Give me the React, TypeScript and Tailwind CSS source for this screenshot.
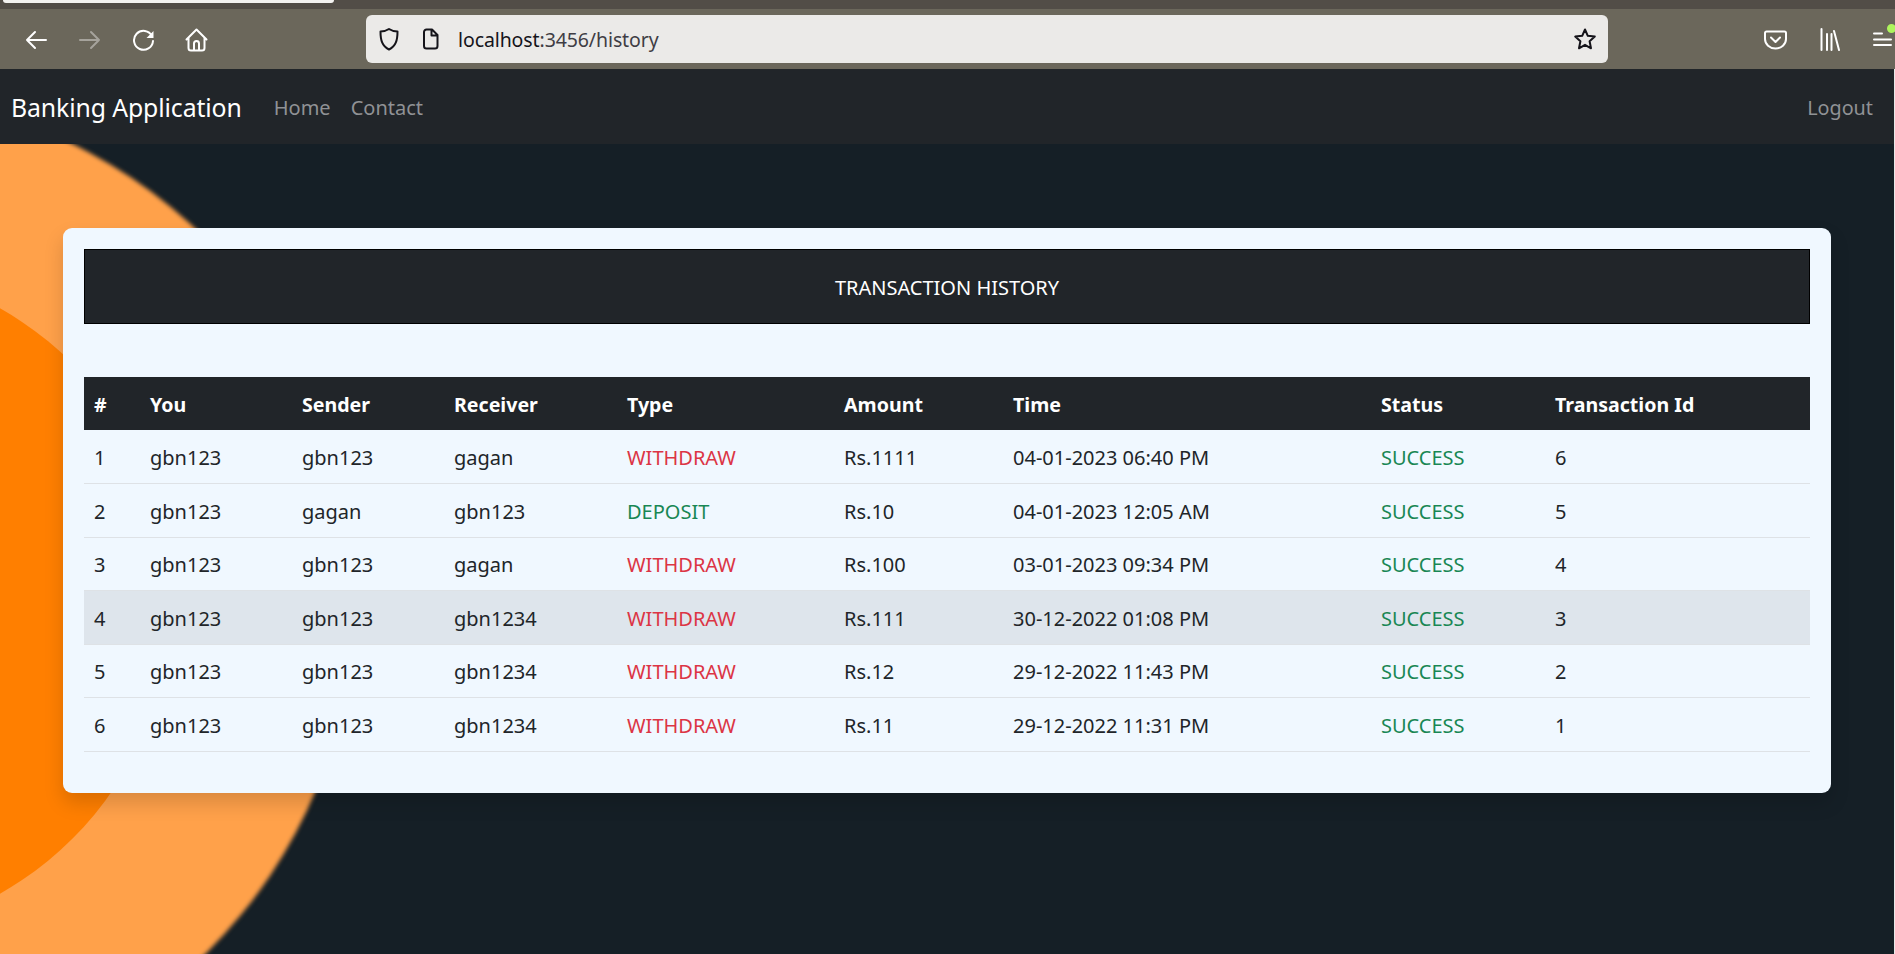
const FONT = "font-['Noto_Sans','Open_Sans',sans-serif]";

const rows = [
  ["1", "gbn123", "gbn123", "gagan", "WITHDRAW", "Rs.1111", "04-01-2023 06:40 PM", "6"],
  ["2", "gbn123", "gagan", "gbn123", "DEPOSIT", "Rs.10", "04-01-2023 12:05 AM", "5"],
  ["3", "gbn123", "gbn123", "gagan", "WITHDRAW", "Rs.100", "03-01-2023 09:34 PM", "4"],
  ["4", "gbn123", "gbn123", "gbn1234", "WITHDRAW", "Rs.111", "30-12-2022 01:08 PM", "3"],
  ["5", "gbn123", "gbn123", "gbn1234", "WITHDRAW", "Rs.12", "29-12-2022 11:43 PM", "2"],
  ["6", "gbn123", "gbn123", "gbn1234", "WITHDRAW", "Rs.11", "29-12-2022 11:31 PM", "1"],
];
const heads = ["#", "You", "Sender", "Receiver", "Type", "Amount", "Time", "Status", "Transaction Id"];
const widths = [56, 152, 152, 173, 217, 169, 368, 174, 265];

function Ico({ w, h, children, sw = 2 }: { w: number; h: number; children: React.ReactNode; sw?: number }) {
  return (
    <svg width={w} height={h} viewBox={`0 0 ${w} ${h}`} fill="none" stroke="currentColor" strokeWidth={sw} strokeLinecap="round" strokeLinejoin="round" className="block shrink-0">
      {children}
    </svg>
  );
}

function Toolbar() {
  return (
    <div className="h-[60px] bg-[#6b675b] flex items-center relative">
      <div className="flex items-center w-[366px] pl-[25px] pt-[2px] text-white">
        <Ico w={22} h={20}><path d="M2 10H21M10 2L2 10L10 18" /></Ico>
        <span className="ml-[32px] text-white/40"><Ico w={22} h={20}><path d="M1 10H20M12 2L20 10L12 18" /></Ico></span>
        <span className="ml-[31px]"><Ico w={23} h={22}><path d="M20 7A9.500 9.500 0 1 0 21 12" /><path d="M21.500 2V9H14.500Z" fill="currentColor" stroke="none" /></Ico></span>
        <span className="ml-[30px]"><Ico w={23} h={24}><path d="M1.500 11.500L11.500 1.500L21.500 11.500M3.500 9.500V20A2.500 2.500 0 0 0 6 22.500H17A2.500 2.500 0 0 0 19.500 20V9.500M9 22.500V15.500A2.500 2.500 0 0 1 14 15.500V22.500" /></Ico></span>
      </div>
      <div className="w-[1242px] h-[48px] bg-[#ebeae8] rounded-[6px] flex items-center pl-[12px] pr-[11px] text-[#15141a]">
        <Ico w={22} h={24}><path d="M11 2C8 4 5 4.500 2.500 4.500C2.500 13 4 19 11 22.500C18 19 19.500 13 19.500 4.500C17 4.500 14 4 11 2Z" /></Ico>
        <span className="ml-[21px]"><Ico w={18} h={22}><path d="M3 4A2.500 2.500 0 0 1 5.500 1.500H11L16.500 7V18A2.500 2.500 0 0 1 14 20.500H5.500A2.500 2.500 0 0 1 3 18ZM10.500 2V7.500H16" /></Ico></span>
        <span className="ml-[19px] pt-[2px] text-[19.500px] tracking-[-0.1px] text-[#15141a]">localhost<span className="text-[#3f3d44]">:3456/history</span></span>
        <span className="ml-auto"><Ico w={24} h={24}><path d="M12 2.500L14.800 8.800L21.800 9.600L16.600 14.300L18 21.300L12 17.800L6 21.300L7.400 14.300L2.200 9.600L9.200 8.800Z" /></Ico></span>
      </div>
      <div className="flex-1 flex items-center text-white pl-[156px] pt-[1px] relative">
        <Ico w={23} h={20}><path d="M2.500 1.500H20.500A1.500 1.500 0 0 1 22 3V9A10.500 9.500 0 0 1 1 9V3A1.500 1.500 0 0 1 2.500 1.500ZM7 7.500L11.500 12L16 7.500" /></Ico>
        <span className="ml-[33px]"><Ico w={20} h={23}><path d="M1.500 1V22M7 6V22M11.500 6V22M14 3L19 22" /></Ico></span>
        <span className="ml-[33px]"><Ico w={19} h={15}><path d="M1 1.500H9M1 7.500H18M1 13H18" /></Ico></span>
      </div>
      <span className="absolute left-[1887px] top-[15px] w-[9px] h-[9px] rounded-full bg-[#aef55c]" />
    </div>
  );
}

function Navbar() {
  return (
    <nav className="h-[75px] bg-[#212529] flex items-center pl-[11px] pr-[21px]">
      <span className="pt-[2px] text-[24.800px] text-white tracking-[-0.1px]">Banking Application</span>
      <span className="ml-[32px] pt-[3px] text-[20px] text-[#909295]">Home</span>
      <span className="ml-[20px] pt-[3px] text-[20px] text-[#909295]">Contact</span>
      <span className="ml-auto pt-[3px] text-[19.800px] text-[#909295]">Logout</span>
    </nav>
  );
}

export default function App() {
  return (
    <div className={`w-[1895px] h-[954px] overflow-hidden flex flex-col bg-[#151f26] ${FONT}`}>
      <div className="h-[9px] bg-[#524d47] shrink-0">
        <div className="ml-[3px] w-[331px] h-[3px] bg-[#f4f3f1] rounded-b-[3px]" />
      </div>
      <Toolbar />
      <div className="flex-1 min-h-0 flex flex-col border-r border-[#e8e8e8]">
        <Navbar />
        <main className="relative flex-1 overflow-hidden pt-[84px] pl-[63px] pr-[63px]">
          <div className="absolute left-[-651px] top-[-51px] w-[1006px] h-[1006px] rounded-full bg-[#ffa14a] blur-[2px]" />
          <div className="absolute left-[-501px] top-[121px] w-[672px] h-[672px] rounded-full bg-[#ff7f00]" />
          <section className="relative h-[565px] bg-[#f0f8ff] rounded-[9px] pt-[21px] px-[21px] shadow-[0_10px_19px_rgba(0,0,0,0.15)] text-[#212529]">
            <div className="h-[75px] bg-[#212529] border border-black flex items-center justify-center pt-[2px] text-[20px] text-white">
              TRANSACTION HISTORY
            </div>
            <table className="mt-[53px] w-full table-fixed border-collapse text-[20px]">
              <colgroup>
                {widths.map((w, i) => <col key={i} style={{ width: w }} />)}
              </colgroup>
              <thead>
                <tr className="h-[53px] bg-[#212529] text-white text-[19.600px]">
                  {heads.map((h) => <th key={h} className="text-left font-bold px-[10px] pt-[2px]">{h}</th>)}
                </tr>
              </thead>
              <tbody>
                {rows.map((r, i) => (
                  <tr key={i} className={`h-[53.500px] border-b border-[#dee2e6] ${i === 3 ? "bg-[#dee5ec]" : ""}`}>
                    <td className="px-[10px] pt-[3px]">{r[0]}</td>
                    <td className="px-[10px] pt-[3px]">{r[1]}</td>
                    <td className="px-[10px] pt-[3px]">{r[2]}</td>
                    <td className="px-[10px] pt-[3px]">{r[3]}</td>
                    <td className={`px-[10px] pt-[3px] ${r[4] === "DEPOSIT" ? "text-[#198754]" : "text-[#dc3545]"}`}>{r[4]}</td>
                    <td className="px-[10px] pt-[3px]">{r[5]}</td>
                    <td className="px-[10px] pt-[3px]">{r[6]}</td>
                    <td className="px-[10px] pt-[3px] text-[#198754]">SUCCESS</td>
                    <td className="px-[10px] pt-[3px]">{r[7]}</td>
                  </tr>
                ))}
              </tbody>
            </table>
          </section>
        </main>
      </div>
    </div>
  );
}
